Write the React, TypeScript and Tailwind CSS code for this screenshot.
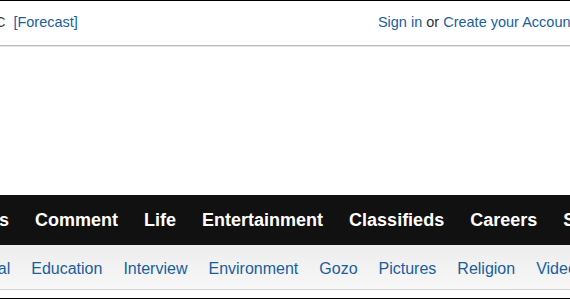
export default function App() {
  const mainNav = ["News", "Comment", "Life", "Entertainment", "Classifieds", "Careers", "Sport"]
  const subNav = ["Local", "Education", "Interview", "Environment", "Gozo", "Pictures", "Religion", "Video"]

  return (
    <main className="w-[570px] h-[299px] overflow-hidden bg-white font-['Liberation_Sans',Arial,sans-serif]">
      {/* Top bar */}
      <header className="h-[46px] border-t border-black border-b border-b-[#b9bdc1] shadow-[0_1px_0_#e4e6e8] flex items-center text-[14.5px] whitespace-nowrap">
        <div className="flex items-center ml-[-27px] shrink-0">
          <span className="text-[#333]">23°C</span>
          <a className="ml-[8px] text-[#1b5e9e]">[Forecast]</a>
        </div>
        <div className="ml-[300px] shrink-0">
          <a className="text-[#1b5e9e]">Sign in</a>
          <span className="text-[#333]"> or </span>
          <a className="text-[#1b5e9e]">Create your Account</a>
        </div>
      </header>

      {/* Advert space */}
      <div className="h-[149px]" />

      {/* Main navigation */}
      <nav className="h-[50px] bg-[#111111] flex items-center whitespace-nowrap">
        <div className="flex items-center gap-[26px] ml-[-38px] shrink-0">
          {mainNav.map((item) => (
            <a key={item} className="text-white font-bold text-[18px] leading-none">
              {item}
            </a>
          ))}
        </div>
      </nav>

      {/* Sub navigation */}
      <div className="h-[45px] pt-[3px] bg-gradient-to-b from-[#ededed] to-[#f7f7f7] border-b border-[#d2d2d2] flex items-center whitespace-nowrap">
        <div className="flex items-center gap-[21px] ml-[-28px] shrink-0">
          {subNav.map((item) => (
            <a key={item} className="text-[#1b5e9e] text-[16px] leading-none">
              {item}
            </a>
          ))}
        </div>
      </div>

      <div className="h-[8px]" />
      <div className="h-[1px] bg-black" />
    </main>
  )
}
